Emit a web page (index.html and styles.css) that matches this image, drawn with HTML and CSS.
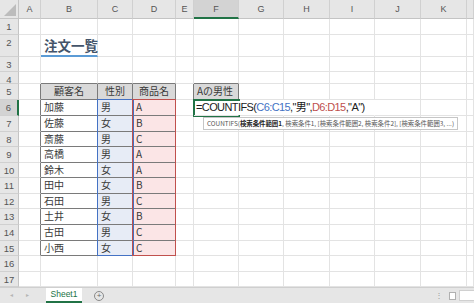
FILE: index.html
```html
<!DOCTYPE html>
<html lang="ja">
<head>
    <meta charset="UTF-8">
    <meta name="viewport" content="width=device-width, initial-scale=1.0">
    <title>注文一覧</title>
    <link rel="stylesheet" href="styles.css">
</head>
<body>
    <div class="sheet" id="sheet">
        <div class="range range-blue"></div>
        <div class="range range-red"></div>
        <div class="selected"></div>
        <div class="tooltip">COUNTIFS(<b>検索条件範囲1</b>, 検索条件1, [検索条件範囲2, 検索条件2], [検索条件範囲3, ...)</div>
    </div>
    <div class="tabs">
        <span class="nav">◂</span>
        <span class="nav">▸</span>
        <span class="tab">Sheet1</span>
        <span class="add">+</span>
        <span class="spacer"></span>
        <span class="dots">⋮</span>
        <span class="box"></span>
        <span class="scroll"></span>
    </div>
    <script>
        const letters = ["", "A", "B", "C", "D", "E", "F", "G", "H", "I", "J", "K", ""];
        const names = ["加藤", "佐藤", "斎藤", "高橋", "鈴木", "田中", "石田", "土井", "古田", "小西"];
        const genders = ["男", "女", "男", "男", "女", "女", "男", "女", "男", "女"];
        const items = ["A", "B", "C", "A", "A", "B", "C", "B", "C", "C"];
        const formula = '=COUNTIFS(<span class="ref-blue">C6:C15</span>,"男",<span class="ref-red">D6:D15</span>,"A")';

        function inTable(r, c) {
            return (r >= 5 && r <= 15 && c >= 2 && c <= 4) || (r == 5 && c == 6);
        }

        function buildSheet() {
            let sheet = document.getElementById("sheet");
            for (let r = 0; r <= 17; r++) {
                for (let c = 0; c <= 12; c++) {
                    let cell = document.createElement("div");
                    cell.className = "cell";
                    if (r == 0 && c == 0) {
                        cell.classList.add("corner");
                    } else if (r == 0) {
                        cell.classList.add("col-head");
                        if (c == 6) cell.classList.add("active");
                        cell.textContent = letters[c];
                    } else if (c == 0) {
                        cell.classList.add("row-head");
                        if (r == 6) cell.classList.add("active");
                        cell.textContent = r;
                    }

                    if (inTable(r, c)) cell.classList.add("boxed");
                    if (inTable(r, c + 1)) cell.classList.add("edge-right");
                    if (inTable(r + 1, c)) cell.classList.add("edge-bottom");

                    if (r == 2 && c == 2) {
                        cell.classList.add("title");
                        cell.textContent = "注文一覧";
                    }
                    if (r == 5 && c >= 2 && c <= 4) {
                        cell.classList.add("th");
                        cell.textContent = ["顧客名", "性別", "商品名"][c - 2];
                    }
                    if (r == 5 && c == 6) {
                        cell.classList.add("th", "left");
                        cell.textContent = "Aの男性";
                    }
                    if (r >= 6 && r <= 15) {
                        let i = r - 6;
                        if (c == 2) cell.textContent = names[i];
                        if (c == 3) { cell.classList.add("blue"); cell.textContent = genders[i]; }
                        if (c == 4) { cell.classList.add("red"); cell.textContent = items[i]; }
                    }
                    if (r == 6 && c >= 6 && c <= 9) cell.classList.add("spill");
                    if (r == 6 && c == 6) {
                        cell.classList.add("formula");
                        cell.innerHTML = formula;
                    }
                    sheet.appendChild(cell);
                }
            }
        }

        buildSheet();
    </script>
</body>
</html>
```

FILE: styles.css
```css
body {
    margin: 0;
    width: 474px;
    height: 303px;
    overflow: hidden;
    background: #ffffff;
    font-family: "Noto Sans CJK JP", "Liberation Sans", sans-serif;
}

.sheet {
    position: relative;
    display: grid;
    grid-template-columns: 19px 22px 57px 35px 43px 18px 45px 45px 46px 45px 46px 46px 7px;
    grid-template-rows: 19px 16px 22px 15px 12px 16px 16px 16px 15px 16px 15px 16px 15px 16px 16px 15px 16px 15px;
}

.cell {
    box-sizing: border-box;
    border-right: 1px solid #e3e3e3;
    border-bottom: 1px solid #e3e3e3;
    font-size: 10px;
    line-height: 14px;
    color: #3a3a3a;
    padding-left: 3px;
    white-space: nowrap;
    overflow: hidden;
}

.corner {
    background: #e6e6e6;
    border-right-color: #c4c4c4;
    border-bottom-color: #c4c4c4;
    position: relative;
}

.corner::after {
    content: "";
    position: absolute;
    right: 2px;
    bottom: 2px;
    width: 12px;
    height: 12px;
    background: #bcbcbc;
    clip-path: polygon(100% 0, 100% 100%, 0 100%);
}

.col-head {
    background: #e6e6e6;
    border-bottom-color: #c4c4c4;
    border-right-color: #d0d0d0;
    text-align: center;
    padding: 0;
    font-family: "Liberation Sans", sans-serif;
    font-size: 9px;
    line-height: 19px;
    color: #555555;
}

.row-head {
    background: #e6e6e6;
    border-right-color: #c4c4c4;
    border-bottom-color: #d0d0d0;
    text-align: center;
    padding: 0;
    font-family: "Liberation Sans", sans-serif;
    font-size: 9.5px;
    line-height: 15px;
    color: #555555;
}

.col-head.active {
    background: #d3d3d3;
    border-bottom: 2px solid #217346;
    line-height: 18px;
}

.row-head.active {
    background: #d3d3d3;
    border-right: 2px solid #217346;
}

.boxed {
    border-right-color: #7a7a7a;
    border-bottom-color: #7a7a7a;
}

.edge-right {
    border-right-color: #7a7a7a;
}

.edge-bottom {
    border-bottom-color: #7a7a7a;
}

.title {
    font-size: 13.5px;
    font-weight: bold;
    color: #44546a;
    line-height: 20px;
    border-bottom: 2px solid #5b9bd5;
    overflow: visible;
}

.th {
    background: #d9d9d9;
    text-align: center;
    padding: 0;
}

.th.left {
    text-align: left;
    padding-left: 3px;
}

.blue {
    background: #e7ecf6;
}

.red {
    background: #fbe5e6;
}

.spill {
    border-right-color: transparent;
}

.formula {
    overflow: visible;
    position: relative;
    z-index: 5;
    font-family: "Liberation Sans", "Noto Sans CJK JP", sans-serif;
    font-size: 11px;
    letter-spacing: -0.6px;
    line-height: 15px;
    padding-left: 2px;
    color: #222222;
}

.ref-blue {
    color: #4472c4;
}

.ref-red {
    color: #c0504d;
}

.range {
    position: absolute;
    box-sizing: border-box;
    top: 99px;
    height: 157px;
    z-index: 3;
}

.range-blue {
    left: 97px;
    width: 37px;
    border: 1.5px solid #4472c4;
}

.range-red {
    left: 132px;
    width: 44px;
    border: 1.5px solid #c0504d;
}

.selected {
    position: absolute;
    box-sizing: border-box;
    left: 193px;
    top: 99px;
    width: 47px;
    height: 18px;
    border: 2px solid #217346;
    border-right: none;
    z-index: 3;
}

.tooltip {
    position: absolute;
    left: 203px;
    top: 117px;
    height: 11px;
    padding: 0 3px;
    background: #ffffff;
    border: 1px solid #c6c6c6;
    font-size: 6.4px;
    line-height: 11px;
    color: #555555;
    white-space: nowrap;
    z-index: 4;
}

.tooltip b {
    color: #222222;
}

.tabs {
    display: flex;
    align-items: stretch;
    height: 16px;
    box-sizing: border-box;
    background: #e6e6e6;
    border-top: 1px solid #cfcfcf;
    font-family: "Liberation Sans", sans-serif;
}

.nav {
    width: 10px;
    margin-left: 6px;
    font-size: 6px;
    line-height: 15px;
    color: #b5b5b5;
    text-align: center;
}

.tab {
    margin-left: 14px;
    width: 36px;
    background: #ffffff;
    color: #217346;
    font-size: 8.5px;
    line-height: 13px;
    text-align: center;
    border-bottom: 2px solid #217346;
    box-sizing: border-box;
}

.add {
    margin-left: 12px;
    margin-top: 3px;
    width: 8px;
    height: 8px;
    border: 1px solid #8a8a8a;
    border-radius: 50%;
    font-size: 8px;
    line-height: 8px;
    text-align: center;
    color: #6a6a6a;
}

.spacer {
    flex: 1;
}

.dots {
    font-size: 8px;
    line-height: 15px;
    color: #9a9a9a;
    margin-right: 6px;
}

.box {
    width: 5px;
    height: 6px;
    margin-top: 4px;
    background: #ffffff;
    border: 1px solid #b0b0b0;
    margin-right: 3px;
}

.scroll {
    width: 14px;
    margin: 2px 0 2px 0;
    background: #ffffff;
    border: 1px solid #d0d0d0;
    border-right: none;
}
```
